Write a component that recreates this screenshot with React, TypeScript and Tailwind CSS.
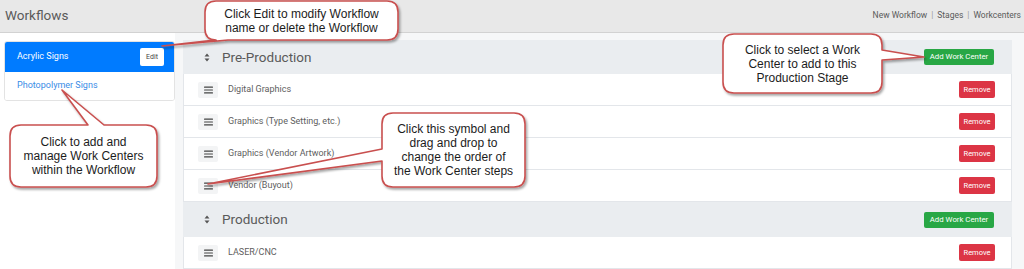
import React from 'react';

type Side = 'top' | 'right' | 'bottom' | 'left';

// rounded box with a wedge tail on one side, PowerPoint callout style
function bubblePath(x: number, y: number, w: number, h: number, r: number, side: Side, b1: number, b2: number, tx: number, ty: number) {
  const R = x + w;
  const B = y + h;
  let d = `M ${x + r} ${y} `;
  if (side === 'top') d += `L ${b1} ${y} L ${tx} ${ty} L ${b2} ${y} `;
  d += `L ${R - r} ${y} Q ${R} ${y} ${R} ${y + r} `;
  if (side === 'right') d += `L ${R} ${b1} L ${tx} ${ty} L ${R} ${b2} `;
  d += `L ${R} ${B - r} Q ${R} ${B} ${R - r} ${B} `;
  if (side === 'bottom') d += `L ${b2} ${B} L ${tx} ${ty} L ${b1} ${B} `;
  d += `L ${x + r} ${B} Q ${x} ${B} ${x} ${B - r} `;
  if (side === 'left') d += `L ${x} ${b2} L ${tx} ${ty} L ${x} ${b1} `;
  d += `L ${x} ${y + r} Q ${x} ${y} ${x + r} ${y} Z`;
  return d;
}

const callouts = [
  { x: 205, y: 1, w: 193, h: 39, side: 'bottom' as Side, b1: 215, b2: 228, tx: 162, ty: 46, lines: ['Click Edit to modify Workflow', 'name or delete the Workflow'] },
  { x: 723, y: 34, w: 159, h: 59, side: 'right' as Side, b1: 50, b2: 60, tx: 924, ty: 57, lines: ['Click to select a Work', 'Center to add to this', 'Production Stage'] },
  { x: 10, y: 125, w: 147, h: 62, side: 'top' as Side, b1: 88, b2: 104, tx: 62, ty: 90, lines: ['Click to add and', 'manage Work Centers', 'within the Workflow'] },
  { x: 382, y: 113, w: 143, h: 74, side: 'left' as Side, b1: 149, b2: 161, tx: 208, ty: 184, lines: ['Click this symbol and', 'drag and drop to', 'change the order of', 'the Work Center steps'] },
];

const stages = [
  { name: 'Pre-Production', items: ['Digital Graphics', 'Graphics (Type Setting, etc.)', 'Graphics (Vendor Artwork)', 'Vendor (Buyout)'] },
  { name: 'Production', items: ['LASER/CNC'] },
];

function SortIcon() {
  return (
    <svg width="6" height="9" viewBox="0 0 6 9" className="shrink-0">
      <path d="M3 0.5 L5.5 3.5 L0.5 3.5 Z" fill="#555" />
      <path d="M3 8.5 L5.5 5.5 L0.5 5.5 Z" fill="#555" />
    </svg>
  );
}

function BarsIcon() {
  return (
    <svg width="9" height="8" viewBox="0 0 9 8">
      <rect x="0" y="0.6" width="9" height="1.2" rx="0.5" fill="#444" />
      <rect x="0" y="3.4" width="9" height="1.2" rx="0.5" fill="#444" />
      <rect x="0" y="6.2" width="9" height="1.2" rx="0.5" fill="#444" />
    </svg>
  );
}

export default function App() {
  return (
    <div className="relative w-[1024px] h-[269px] overflow-hidden bg-white font-['Roboto','Liberation_Sans',sans-serif] text-[#555]">
      {/* Top bar */}
      <header className="h-[33px] bg-[#e8e8e8] border-b border-[#d2d2d2] flex items-center justify-between pl-[5px] pr-[3px]">
        <h1 className="text-[13.5px] text-[#5a5a5a] pb-[2px]">Workflows</h1>
        <nav className="text-[8.5px] text-[#5a5a5a] flex gap-[4px] pb-[2px]">
          <span>New Workflow</span>
          <span className="text-[#999]">|</span>
          <span>Stages</span>
          <span className="text-[#999]">|</span>
          <span>Workcenters</span>
        </nav>
      </header>

      <div className="flex h-[236px]">
        {/* Workflow list */}
        <aside className="w-[175px] shrink-0 pl-[4px] pt-[8px]">
          <div className="rounded-[3px] border border-[#e3e3e3] overflow-hidden">
            <div className="h-[30px] bg-[#007bff] flex items-center justify-between pl-[12px] pr-[10px]">
              <span className="text-[9px] text-white">Acrylic Signs</span>
              <button className="h-[18px] w-[24px] bg-white rounded-[2px] text-[7px] text-[#444]">Edit</button>
            </div>
            <div className="h-[28px] flex items-center pl-[12px] bg-white">
              <span className="text-[9px] text-[#3a8ce6]">Photopolymer Signs</span>
            </div>
          </div>
        </aside>

        {/* Stages */}
        <main className="flex-1 bg-[#f6f7f8] pl-[8px] pr-[12px] pt-[7px]">
          {stages.map((stage, si) => (
            <div key={stage.name}>
              <div className={`${si === 0 ? 'h-[34px]' : 'h-[35px]'} bg-[#eaedf0] flex items-center pl-[21px] pr-[18px]`}>
                <SortIcon />
                <span className="ml-[12px] text-[13.5px] text-[#5a5a5a] flex-1">{stage.name}</span>
                <button className="h-[16px] w-[70px] bg-[#28a745] rounded-[2px] text-[7.8px] text-white">Add Work Center</button>
              </div>
              {stage.items.map((item) => (
                <div key={item} className="h-[32px] bg-white border-x border-b border-[#e3e6ea] flex items-center pl-[14px] pr-[16px]">
                  <div className="w-[20px] h-[16px] bg-[#f3f4f5] rounded-[2px] flex items-center justify-center">
                    <BarsIcon />
                  </div>
                  <span className="ml-[10px] text-[9px] text-[#606060] flex-1">{item}</span>
                  <button className="h-[17px] w-[36px] bg-[#dc3545] rounded-[2px] text-[7.5px] text-white">Remove</button>
                </div>
              ))}
            </div>
          ))}
        </main>
      </div>

      {/* Annotation callouts */}
      <svg className="absolute inset-0 pointer-events-none" width="1024" height="269">
        <defs>
          <filter id="shadow" x="-10%" y="-10%" width="130%" height="140%">
            <feDropShadow dx="1.5" dy="2" stdDeviation="1.3" floodColor="#000" floodOpacity="0.35" />
          </filter>
        </defs>
        {callouts.map((c, i) => (
          <path
            key={i}
            d={bubblePath(c.x, c.y, c.w, c.h, 11, c.side, c.b1, c.b2, c.tx, c.ty)}
            fill="#fff"
            stroke="#c9504f"
            strokeWidth="1.6"
            strokeLinejoin="round"
            filter="url(#shadow)"
          />
        ))}
      </svg>
      {callouts.map((c, i) => (
        <div
          key={i}
          className="absolute flex flex-col items-center justify-center text-center font-['Liberation_Sans',Arial,sans-serif] text-[12px] leading-[14px] text-[#1c1c1c] pointer-events-none"
          style={{ left: c.x, top: c.y, width: c.w, height: c.h }}
        >
          {c.lines.map((l) => (
            <span key={l}>{l}</span>
          ))}
        </div>
      ))}
    </div>
  );
}
